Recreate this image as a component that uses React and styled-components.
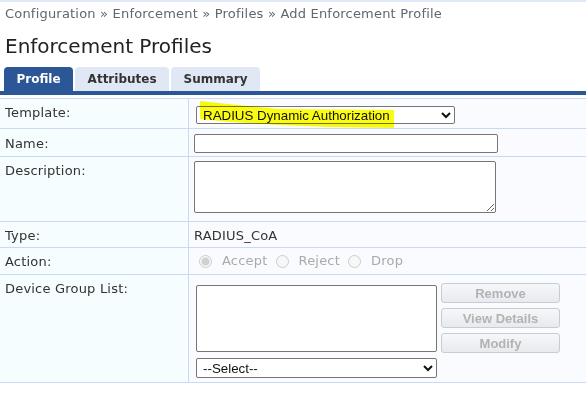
import React from 'react';
import styled, { createGlobalStyle } from 'styled-components';

const GlobalStyle = createGlobalStyle`
  html, body {
    margin: 0;
    padding: 0;
    background: #fff;
  }
  body {
    font-family: "DejaVu Sans", Verdana, sans-serif;
    font-size: 13px;
    letter-spacing: 0.2px;
    color: #333;
  }
`;

const Page = styled.div`
  width: 586px;
  border-top: 2px solid #dfe9f5;
`;

const Breadcrumb = styled.div`
  padding: 3px 5px 0;
  line-height: 18px;
  color: #5f6770;
`;

const Title = styled.h1`
  margin: 10px 0 0;
  padding: 0 5px;
  font-size: 20px;
  font-weight: normal;
  letter-spacing: 0;
  line-height: 27px;
  color: #222;
`;

const TabBar = styled.div`
  display: flex;
  gap: 2px;
  margin-top: 7px;
  padding-left: 4px;
  border-bottom: 4px solid #2b5796;
`;

const Tab = styled.div`
  height: 24px;
  line-height: 25px;
  padding: 0 12.5px;
  border-radius: 4px 4px 0 0;
  font-size: 12px;
  font-weight: bold;
  letter-spacing: 0;
  background: ${p => (p.$active ? '#2b5796' : '#dfe8f4')};
  color: ${p => (p.$active ? '#fff' : '#333')};
`;

const Form = styled.div`
  margin-top: 3px;
  border-top: 1px solid #c9d9f3;
`;

const Row = styled.div`
  display: grid;
  grid-template-columns: 189px 1fr;
  height: ${p => p.$h}px;
  box-sizing: border-box;
  border-bottom: 1px solid #c9d9f3;
`;

const Label = styled.div`
  padding: ${p => p.$pt || 5}px 5px 0;
  line-height: 18px;
  background: #f6fdff;
  border-right: 1px solid #c9d9f3;
  color: #333;
`;

const Value = styled.div`
  padding: 4px 5px 0;
  line-height: 18px;
  background: #fafbff;
  color: #333;
`;

const TypeText = styled.div`
  padding-top: 1px;
`;

const controlFont = `
  font-family: "Liberation Sans", Arial, sans-serif;
  font-size: 13.333px;
  letter-spacing: 0;
  color: #111;
  background: #fff;
  border: 1px solid #767676;
  border-radius: 2px;
  box-sizing: border-box;
`;

const Select = styled.select`
  ${controlFont}
  display: block;
  width: ${p => p.$w}px;
  height: ${p => p.$h}px;
  padding: 0 2px;
`;

const TextInput = styled.input`
  ${controlFont}
  display: block;
  width: 304px;
  height: 19px;
  margin-top: 1px;
  padding: 0 3px;
`;

const TextArea = styled.textarea`
  ${controlFont}
  display: block;
  width: 302px;
  height: 52px;
  padding: 2px;
`;

const HighlightWrap = styled.div`
  position: relative;
  display: inline-block;
  margin: 3px 0 0 2px;
`;

const Highlight = styled.svg`
  position: absolute;
  left: 0;
  top: -6px;
  width: 200px;
  height: 30px;
  pointer-events: none;
  mix-blend-mode: multiply;
`;

const Radios = styled.div`
  display: flex;
  gap: 8px;
  padding-left: 5px;
  color: #aaa;
`;

const Option = styled.label`
  display: flex;
  align-items: center;
  gap: 10px;
`;

const Radio = styled.input`
  width: 13px;
  height: 13px;
  margin: 0;
`;

const DeviceBox = styled.div`
  display: flex;
  gap: 4px;
  align-items: flex-start;
  margin-top: 4px;
`;

const DeviceLeft = styled.div`
  display: flex;
  flex-direction: column;
  gap: 6px;
  margin: 2px 0 0 2px;
`;

const ListBox = styled.select`
  ${controlFont}
  display: block;
  width: 241px;
  height: 67px;
  overflow: hidden;
`;

const Buttons = styled.div`
  display: flex;
  flex-direction: column;
  gap: 5px;
`;

const Button = styled.button`
  width: 119px;
  height: 20px;
  padding: 0;
  font-family: "Liberation Sans", Arial, sans-serif;
  font-size: 13px;
  font-weight: bold;
  letter-spacing: 0;
  color: #b3b3b3;
  background: linear-gradient(#f6f7f9, #e7eaee);
  border: 1px solid #c7ccd3;
  border-radius: 3px;
`;

export default function App() {
  return (
    <Page>
      <GlobalStyle />
      <Breadcrumb>Configuration » Enforcement » Profiles » Add Enforcement Profile</Breadcrumb>
      <Title>Enforcement Profiles</Title>
      <TabBar>
        <Tab $active>Profile</Tab>
        <Tab>Attributes</Tab>
        <Tab>Summary</Tab>
      </TabBar>
      <Form>
        <Row $h={30}>
          <Label>Template:</Label>
          <Value>
            <HighlightWrap>
              <Select $w={259} $h={18} defaultValue="coa">
                <option value="coa">RADIUS Dynamic Authorization</option>
              </Select>
              <Highlight viewBox="196 100 200 30">
                <polygon
                  points="200,101 237,105 280,109 394,110 394,128 330,127 280,125 230,122 200,119"
                  fill="#fbfc14"
                />
              </Highlight>
            </HighlightWrap>
          </Value>
        </Row>
        <Row $h={28}>
          <Label $pt={6}>Name:</Label>
          <Value>
            <TextInput type="text" />
          </Value>
        </Row>
        <Row $h={65}>
          <Label>Description:</Label>
          <Value>
            <TextArea />
          </Value>
        </Row>
        <Row $h={26}>
          <Label>Type:</Label>
          <Value>
            <TypeText>RADIUS_CoA</TypeText>
          </Value>
        </Row>
        <Row $h={27}>
          <Label>Action:</Label>
          <Value>
            <Radios>
              <Option><Radio type="radio" name="action" defaultChecked disabled />Accept</Option>
              <Option><Radio type="radio" name="action" disabled />Reject</Option>
              <Option><Radio type="radio" name="action" disabled />Drop</Option>
            </Radios>
          </Value>
        </Row>
        <Row $h={108}>
          <Label>Device Group List:</Label>
          <Value>
            <DeviceBox>
              <DeviceLeft>
                <ListBox multiple />
                <Select $w={241} $h={20} defaultValue="">
                  <option value="">--Select--</option>
                </Select>
              </DeviceLeft>
              <Buttons>
                <Button disabled>Remove</Button>
                <Button disabled>View Details</Button>
                <Button disabled>Modify</Button>
              </Buttons>
            </DeviceBox>
          </Value>
        </Row>
      </Form>
    </Page>
  );
}
